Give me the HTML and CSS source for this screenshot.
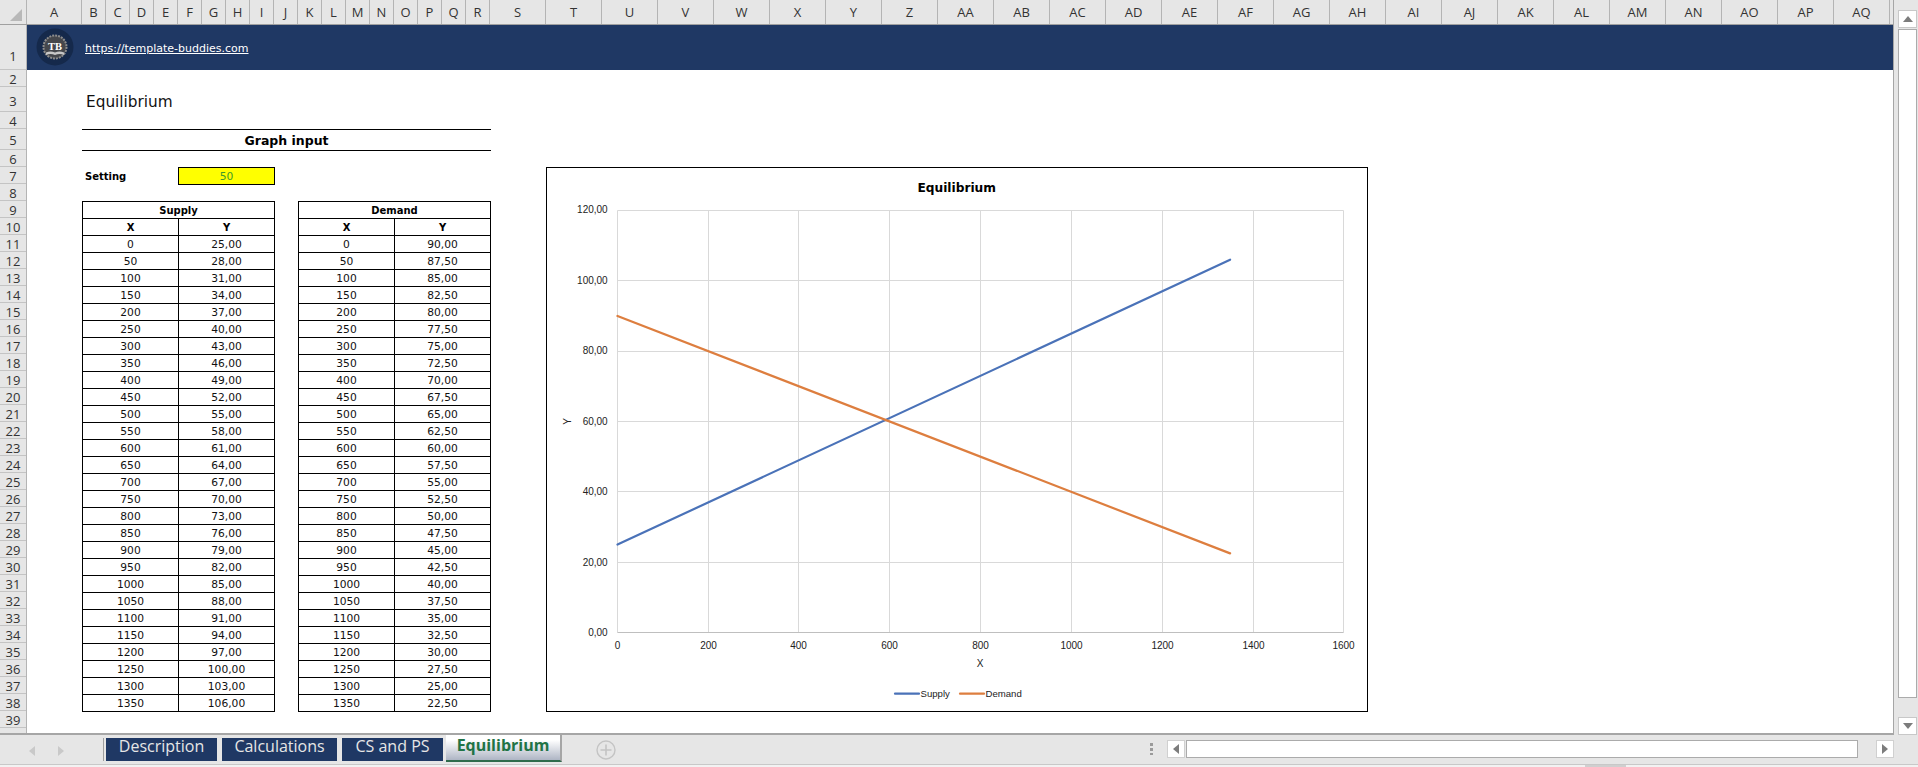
FILE: index.html
```html
<!DOCTYPE html>
<html lang="en">
<head>
<meta charset="utf-8">
<title>Equilibrium</title>
<link rel="stylesheet" href="styles.css">
</head>
<body>
<div class="excel">
  <div class="sheet">
    <div class="colheads">
      <div class="corner"><svg width="12" height="12" viewBox="0 0 12 12"><polygon points="12,0 12,12 0,12" fill="#b8b8b8"/></svg></div>
      <div class="col col-a">A</div>
      <div class="col col-n">B</div><div class="col col-n">C</div><div class="col col-n">D</div><div class="col col-n">E</div><div class="col col-n">F</div><div class="col col-n">G</div><div class="col col-n">H</div><div class="col col-n">I</div><div class="col col-n">J</div><div class="col col-n">K</div><div class="col col-n">L</div><div class="col col-n">M</div><div class="col col-n">N</div><div class="col col-n">O</div><div class="col col-n">P</div><div class="col col-n">Q</div><div class="col col-n">R</div>
      <div class="col col-w">S</div><div class="col col-w">T</div><div class="col col-w">U</div><div class="col col-w">V</div><div class="col col-w">W</div><div class="col col-w">X</div><div class="col col-w">Y</div><div class="col col-w">Z</div><div class="col col-w">AA</div><div class="col col-w">AB</div><div class="col col-w">AC</div><div class="col col-w">AD</div><div class="col col-w">AE</div><div class="col col-w">AF</div><div class="col col-w">AG</div><div class="col col-w">AH</div><div class="col col-w">AI</div><div class="col col-w">AJ</div><div class="col col-w">AK</div><div class="col col-w">AL</div><div class="col col-w">AM</div><div class="col col-w">AN</div><div class="col col-w">AO</div><div class="col col-w">AP</div><div class="col col-w">AQ</div>
    </div>
    <div class="sheet-body">
      <div class="rowheads">
        <div class="rh rh-banner">1</div><div class="rh">2</div><div class="rh rh-title">3</div><div class="rh">4</div><div class="rh rh-head">5</div><div class="rh">6</div><div class="rh">7</div><div class="rh">8</div><div class="rh">9</div><div class="rh">10</div><div class="rh">11</div><div class="rh">12</div><div class="rh">13</div><div class="rh">14</div><div class="rh">15</div><div class="rh">16</div><div class="rh">17</div><div class="rh">18</div><div class="rh">19</div><div class="rh">20</div><div class="rh">21</div><div class="rh">22</div><div class="rh">23</div><div class="rh">24</div><div class="rh">25</div><div class="rh">26</div><div class="rh">27</div><div class="rh">28</div><div class="rh">29</div><div class="rh">30</div><div class="rh">31</div><div class="rh">32</div><div class="rh">33</div><div class="rh">34</div><div class="rh">35</div><div class="rh">36</div><div class="rh">37</div><div class="rh">38</div><div class="rh">39</div><div class="rh">40</div>
      </div>
      <div class="canvas">
        <div class="banner">
          <svg class="logo" width="38" height="38" viewBox="0 0 38 38">
            <circle cx="19" cy="19" r="18.5" fill="#15294b"/>
            <circle cx="19" cy="19" r="11.5" fill="#45474c" stroke="#8d8d8d" stroke-width="2" stroke-dasharray="2 1"/>
            <path d="M10 24.5 Q14.500 22.500 19 24.500 Q23.500 22.500 28 24.500 L28 27 Q23.500 25 19 27 Q14.500 25 10 27 Z" fill="#c8c8c8"/>
            <text x="19" y="21.500" class="logo-text">TB</text>
          </svg>
          <a class="site-link" href="#">https://template-buddies.com</a>
        </div>
        <div class="main">
          <div class="inputs">
            <h1 class="title">Equilibrium</h1>
            <h2 class="graph-input">Graph input</h2>
            <div class="setting"><span class="setting-label">Setting</span><span class="setting-value">50</span></div>
            <div class="tables">
              <table class="data">
                <tr><th colspan="2">Supply</th></tr>
                <tr><th>X</th><th>Y</th></tr>
                <tr><td>0</td><td>25,00</td></tr>
                <tr><td>50</td><td>28,00</td></tr>
                <tr><td>100</td><td>31,00</td></tr>
                <tr><td>150</td><td>34,00</td></tr>
                <tr><td>200</td><td>37,00</td></tr>
                <tr><td>250</td><td>40,00</td></tr>
                <tr><td>300</td><td>43,00</td></tr>
                <tr><td>350</td><td>46,00</td></tr>
                <tr><td>400</td><td>49,00</td></tr>
                <tr><td>450</td><td>52,00</td></tr>
                <tr><td>500</td><td>55,00</td></tr>
                <tr><td>550</td><td>58,00</td></tr>
                <tr><td>600</td><td>61,00</td></tr>
                <tr><td>650</td><td>64,00</td></tr>
                <tr><td>700</td><td>67,00</td></tr>
                <tr><td>750</td><td>70,00</td></tr>
                <tr><td>800</td><td>73,00</td></tr>
                <tr><td>850</td><td>76,00</td></tr>
                <tr><td>900</td><td>79,00</td></tr>
                <tr><td>950</td><td>82,00</td></tr>
                <tr><td>1000</td><td>85,00</td></tr>
                <tr><td>1050</td><td>88,00</td></tr>
                <tr><td>1100</td><td>91,00</td></tr>
                <tr><td>1150</td><td>94,00</td></tr>
                <tr><td>1200</td><td>97,00</td></tr>
                <tr><td>1250</td><td>100,00</td></tr>
                <tr><td>1300</td><td>103,00</td></tr>
                <tr><td>1350</td><td>106,00</td></tr>
              </table>
              <table class="data">
                <tr><th colspan="2">Demand</th></tr>
                <tr><th>X</th><th>Y</th></tr>
                <tr><td>0</td><td>90,00</td></tr>
                <tr><td>50</td><td>87,50</td></tr>
                <tr><td>100</td><td>85,00</td></tr>
                <tr><td>150</td><td>82,50</td></tr>
                <tr><td>200</td><td>80,00</td></tr>
                <tr><td>250</td><td>77,50</td></tr>
                <tr><td>300</td><td>75,00</td></tr>
                <tr><td>350</td><td>72,50</td></tr>
                <tr><td>400</td><td>70,00</td></tr>
                <tr><td>450</td><td>67,50</td></tr>
                <tr><td>500</td><td>65,00</td></tr>
                <tr><td>550</td><td>62,50</td></tr>
                <tr><td>600</td><td>60,00</td></tr>
                <tr><td>650</td><td>57,50</td></tr>
                <tr><td>700</td><td>55,00</td></tr>
                <tr><td>750</td><td>52,50</td></tr>
                <tr><td>800</td><td>50,00</td></tr>
                <tr><td>850</td><td>47,50</td></tr>
                <tr><td>900</td><td>45,00</td></tr>
                <tr><td>950</td><td>42,50</td></tr>
                <tr><td>1000</td><td>40,00</td></tr>
                <tr><td>1050</td><td>37,50</td></tr>
                <tr><td>1100</td><td>35,00</td></tr>
                <tr><td>1150</td><td>32,50</td></tr>
                <tr><td>1200</td><td>30,00</td></tr>
                <tr><td>1250</td><td>27,50</td></tr>
                <tr><td>1300</td><td>25,00</td></tr>
                <tr><td>1350</td><td>22,50</td></tr>
              </table>
            </div>
          </div>
          <svg class="chart" width="820" height="543" viewBox="0 0 820 543">
            <text x="409.7" y="24" class="chart-title">Equilibrium</text>
            <g class="grid-lines">
              <line x1="70.5" y1="42.5" x2="796.5" y2="42.5"/>
              <line x1="70.5" y1="112.5" x2="796.5" y2="112.5"/>
              <line x1="70.5" y1="183.5" x2="796.5" y2="183.5"/>
              <line x1="70.5" y1="253.5" x2="796.5" y2="253.5"/>
              <line x1="70.5" y1="323.5" x2="796.5" y2="323.5"/>
              <line x1="70.5" y1="394.5" x2="796.5" y2="394.5"/>
              <line x1="70.5" y1="42.5" x2="70.5" y2="464.5"/>
              <line x1="161.5" y1="42.5" x2="161.5" y2="464.5"/>
              <line x1="251.5" y1="42.5" x2="251.5" y2="464.5"/>
              <line x1="342.5" y1="42.5" x2="342.5" y2="464.5"/>
              <line x1="433.5" y1="42.5" x2="433.5" y2="464.5"/>
              <line x1="524.5" y1="42.5" x2="524.5" y2="464.5"/>
              <line x1="615.5" y1="42.5" x2="615.5" y2="464.5"/>
              <line x1="706.5" y1="42.5" x2="706.5" y2="464.5"/>
              <line x1="796.5" y1="42.5" x2="796.5" y2="464.5"/>
            </g>
            <line class="axis-line" x1="70.5" y1="464.5" x2="796.5" y2="464.5"/>
            <line class="series-supply" x1="70.5" y1="376.6" x2="683.1" y2="91.7"/>
            <line class="series-demand" x1="70.5" y1="148" x2="683.1" y2="385.4"/>
            <g class="y-ticks">
              <text x="60.7" y="45">120,00</text>
              <text x="60.7" y="115.5">100,00</text>
              <text x="60.7" y="186">80,00</text>
              <text x="60.7" y="256.5">60,00</text>
              <text x="60.7" y="326.5">40,00</text>
              <text x="60.7" y="397.5">20,00</text>
              <text x="60.7" y="467.5">0,00</text>
            </g>
            <g class="x-ticks">
              <text x="70.5" y="481">0</text>
              <text x="161.5" y="481">200</text>
              <text x="251.5" y="481">400</text>
              <text x="342.5" y="481">600</text>
              <text x="433.5" y="481">800</text>
              <text x="524.5" y="481">1000</text>
              <text x="615.5" y="481">1200</text>
              <text x="706.5" y="481">1400</text>
              <text x="796.5" y="481">1600</text>
            </g>
            <text x="433" y="499" class="axis-title-x">X</text>
            <text transform="translate(24 253.5) rotate(-90)" class="axis-title-y">Y</text>
            <line class="series-supply" x1="348" y1="525.7" x2="372" y2="525.7"/>
            <text x="373.5" y="529" class="legend">Supply</text>
            <line class="series-demand" x1="413" y1="525.7" x2="437" y2="525.7"/>
            <text x="438.5" y="529" class="legend">Demand</text>
          </svg>
        </div>
      </div>
    </div>
  </div>
  <div class="vscroll">
    <div class="sb-btn"><svg width="10" height="6" viewBox="0 0 10 6"><polygon points="5,0 10,6 0,6" fill="#7c7c7c"/></svg></div>
    <div class="vthumb"></div>
    <div class="sb-btn sb-bottom"><svg width="10" height="6" viewBox="0 0 10 6"><polygon points="0,0 10,0 5,6" fill="#7c7c7c"/></svg></div>
  </div>
  <div class="tabbar">
    <div class="tab-nav">
      <svg width="6" height="10" viewBox="0 0 6 10"><polygon points="6,0 6,10 0,5" fill="#c9c9c9"/></svg>
      <svg width="6" height="10" viewBox="0 0 6 10"><polygon points="0,0 6,5 0,10" fill="#c9c9c9"/></svg>
    </div>
    <div class="tab">Description</div>
    <div class="tab tab-calc">Calculations</div>
    <div class="tab tab-cs">CS and PS</div>
    <div class="tab tab-active">Equilibrium</div>
    <svg class="add-sheet" width="20" height="20" viewBox="0 0 20 20"><circle cx="10" cy="10" r="9" fill="none" stroke="#c4c4c4" stroke-width="1.4"/><path d="M10 4.5V15.5M4.5 10H15.5" stroke="#c4c4c4" stroke-width="1.6"/></svg>
    <div class="hscroll">
      <div class="grip"></div>
      <div class="hs-btn"><svg width="6" height="10" viewBox="0 0 6 10"><polygon points="6,0 6,10 0,5" fill="#7c7c7c"/></svg></div>
      <div class="hthumb"></div>
      <div class="hs-btn"><svg width="6" height="10" viewBox="0 0 6 10"><polygon points="0,0 6,5 0,10" fill="#7c7c7c"/></svg></div>
    </div>
  </div>
  <div class="status"><div class="status-mark"></div></div>
</div>
</body>
</html>
```
FILE: styles.css
```css
* { box-sizing: border-box; }
html, body { margin: 0; padding: 0; height: 100%; overflow: hidden; }
body { background: #e6e6e6; font-family: "DejaVu Sans", Verdana, sans-serif; color: #000; }

.excel { display: grid; grid-template-columns: 1894px 24px; grid-template-rows: 735px 29px 3px; width: 1918px; height: 767px; }

.sheet { display: flex; flex-direction: column; overflow: hidden; border-right: 1px solid #a6a6a6; border-bottom: 2px solid #a6a6a6; background: #fff; }

.colheads { display: flex; height: 25px; flex: none; background: #e6e6e6; border-bottom: 1px solid #a0a0a0; font-family: "Open Sans", sans-serif; font-size: 13px; color: #333; }
.corner { width: 27px; flex: none; display: flex; align-items: flex-end; justify-content: flex-end; padding: 0 4px 3px 0; border-right: 1px solid #b4b4b4; }
.col { flex: none; display: flex; align-items: center; justify-content: center; border-right: 1px solid #b4b4b4; }
.col-a { width: 55px; }
.col-n { width: 24px; }
.col-w { width: 56px; }

.sheet-body { display: flex; flex: 1; min-height: 0; }

.rowheads { width: 27px; flex: none; background: #e6e6e6; border-right: 1px solid #b4b4b4; font-family: "Open Sans", sans-serif; font-size: 13px; color: #333; overflow: hidden; }
.rh { height: 17px; line-height: 18px; text-align: center; border-bottom: 1px solid #c4c4c4; }
.rh-banner { height: 45px; line-height: 62px; }
.rh-title { height: 25px; line-height: 28px; }
.rh-head { height: 21px; line-height: 22px; }

.canvas { flex: 1; min-width: 0; display: flex; flex-direction: column; overflow: hidden; }

.banner { height: 45px; flex: none; background: #1f3864; display: flex; align-items: center; padding-left: 9px; }
.logo { flex: none; margin-top: -1px; }
.logo-text { font-family: "Liberation Serif", serif; font-weight: 700; font-size: 10.5px; fill: #fff; text-anchor: middle; }
.site-link { margin-left: 11px; padding-top: 2px; color: #fff; font-size: 11px; text-decoration: underline; }

.main { display: flex; padding-left: 55px; }
.inputs { width: 409px; flex: none; }
.title { margin: 0; height: 59px; padding: 22px 0 0 4px; font-size: 15.3px; line-height: 20px; font-weight: 400; color: #111; }
.graph-input { margin: 0; height: 22px; line-height: 22px; text-align: center; font-size: 12.5px; font-weight: 700; border-top: 1px solid #000; border-bottom: 1px solid #000; }

.setting { display: flex; height: 18px; margin-top: 16px; }
.setting-label { width: 96px; padding-left: 3px; font-size: 10px; font-weight: 700; line-height: 20px; }
.setting-value { width: 97px; background: #ff0; border: 1px solid #000; text-align: center; font-size: 10.7px; line-height: 18px; color: #3f9a2b; }

.tables { display: flex; gap: 23px; margin-top: 16px; }
.data { border-collapse: collapse; table-layout: fixed; width: 193px; font-size: 10.7px; }
.data th, .data td { height: 17px; padding: 1px 0 0; border: 1px solid #000; text-align: center; line-height: 15px; color: #111; }
.data th { font-weight: 700; font-size: 10px; color: #000; }

.chart { flex: none; width: 822px; height: 545px; margin: 97px 0 0 55px; border: 1px solid #000; background: #fff; display: block; font-family: "Liberation Sans", sans-serif; }
.chart-title { font-family: "DejaVu Sans", sans-serif; font-weight: 700; font-size: 12.2px; text-anchor: middle; fill: #000; }
.grid-lines line { stroke: #d9d9d9; stroke-width: 1; }
.axis-line { stroke: #bfbfbf; stroke-width: 1; }
.series-supply { stroke: #4a72b8; stroke-width: 2.2; stroke-linecap: round; }
.series-demand { stroke: #dd7e3f; stroke-width: 2.2; stroke-linecap: round; }
.y-ticks text { font-size: 10px; text-anchor: end; fill: #222; }
.x-ticks text { font-size: 10px; text-anchor: middle; fill: #222; }
.axis-title-x, .axis-title-y { font-size: 10px; text-anchor: middle; fill: #222; }
.legend { font-size: 9.6px; fill: #222; }

.vscroll { display: flex; flex-direction: column; padding: 10px 1px 0 4px; background: #e6e6e6; }
.sb-btn { height: 18px; flex: none; background: #fff; border: 1px solid #c8c8c8; display: flex; align-items: center; justify-content: center; }
.sb-bottom { margin-top: 19px; }
.vthumb { flex: 1; background: #fff; border: 1px solid #ababab; margin-top: 1px; }

.tabbar { grid-column: 1 / 3; display: flex; align-items: flex-start; padding-top: 3px; background: #e6e6e6; font-family: "Open Sans", sans-serif; }
.tab-nav { width: 104px; height: 23px; flex: none; display: flex; align-items: center; gap: 23px; padding: 3px 0 0 29px; border-right: 1px solid #9e9e9e; }
.tab { height: 23px; width: 111px; margin-left: 2px; margin-right: 3px; background: #1f3864; color: #e6e6e6; font-size: 16px; line-height: 17px; text-align: center; flex: none; }
.tab-calc { width: 115px; }
.tab-cs { width: 101px; }
.tab-active { width: 116px; height: 27px; margin: -3px 0 0 0; padding-top: 2px; background: linear-gradient(#ffffff 20%, #aeb5c4); color: #217346; font-weight: 700; border-bottom: 2px solid #2f6b4b; border-right: 2px solid #a6a6a6; font-size: 16px; }
.add-sheet { flex: none; margin: 2px 0 0 34px; }

.hscroll { margin-left: auto; height: 18px; margin-top: 2px; margin-right: 24px; display: flex; align-items: stretch; }
.grip { width: 3px; height: 12px; margin: 3px 14px 0 0; background: repeating-linear-gradient(#9a9a9a 0 3px, transparent 3px 5px); flex: none; }
.hs-btn { width: 18px; flex: none; background: #fff; border: 1px solid #d0d0d0; display: flex; align-items: center; justify-content: center; }
.hthumb { width: 672px; flex: none; background: #fff; border: 1px solid #ababab; margin: 0 18px 0 1px; }

.status { grid-column: 1 / 3; background: #f2f2f2; border-top: 1px solid #c8c8c8; display: flex; padding-left: 1585px; }
.status-mark { width: 41px; background: #cfcfcf; }
```
